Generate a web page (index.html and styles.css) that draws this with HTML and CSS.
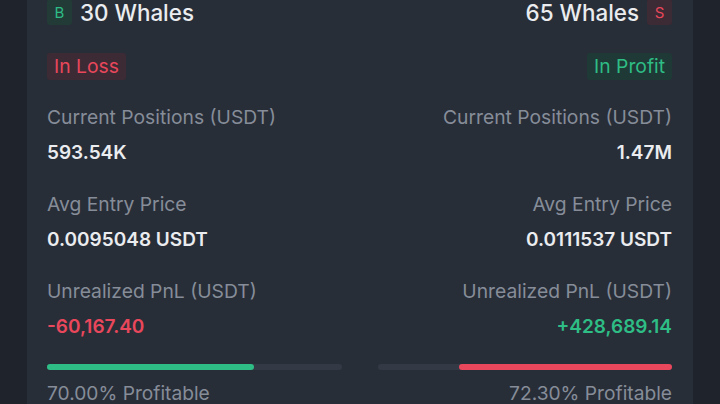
FILE: index.html
```html
<!DOCTYPE html>
<html lang="en">
<head>
<meta charset="utf-8">
<title>Whales Positions</title>
<link rel="stylesheet" href="styles.css">
</head>
<body>
<div class="page">
  <section class="card">
    <div class="col col-long">
      <div class="head">
        <span class="side side-buy">B</span>
        <span class="count">30 Whales</span>
      </div>
      <span class="status status-loss">In Loss</span>
      <div class="stat">
        <div class="label">Current Positions (USDT)</div>
        <div class="value">593.54K</div>
      </div>
      <div class="stat">
        <div class="label">Avg Entry Price</div>
        <div class="value">0.0095048 USDT</div>
      </div>
      <div class="stat">
        <div class="label">Unrealized PnL (USDT)</div>
        <div class="value value-neg">-60,167.40</div>
      </div>
      <div class="bar"><div class="fill fill-green" style="width:70%"></div></div>
      <div class="foot">70.00% Profitable</div>
    </div>
    <div class="col col-short">
      <div class="head">
        <span class="count">65 Whales</span>
        <span class="side side-sell">S</span>
      </div>
      <span class="status status-profit">In Profit</span>
      <div class="stat">
        <div class="label">Current Positions (USDT)</div>
        <div class="value">1.47M</div>
      </div>
      <div class="stat">
        <div class="label">Avg Entry Price</div>
        <div class="value">0.0111537 USDT</div>
      </div>
      <div class="stat">
        <div class="label">Unrealized PnL (USDT)</div>
        <div class="value value-pos">+428,689.14</div>
      </div>
      <div class="bar bar-right"><div class="fill fill-red" style="width:72.3%"></div></div>
      <div class="foot">72.30% Profitable</div>
    </div>
  </section>
</div>
</body>
</html>
```

FILE: styles.css
```css
* { box-sizing: border-box; }
html, body {
  margin: 0;
  padding: 0;
  background: #1f242c;
  font-family: Inter, "Liberation Sans", sans-serif;
  overflow: hidden;
}
.page {
  width: 720px;
  height: 404px;
  padding: 0 27px;
}
.card {
  background: #282e38;
  height: 404px;
  padding: 0 21px 0 20px;
  display: grid;
  grid-template-columns: 295px 294px;
  column-gap: 36px;
  align-content: start;
}
.col {
  display: flex;
  flex-direction: column;
  align-items: flex-start;
  margin-top: -1px;
}
.col-short {
  align-items: flex-end;
  text-align: right;
}
.head {
  display: flex;
  align-items: center;
  gap: 8px;
  height: 26px;
}
.side {
  width: 25px;
  height: 26px;
  border-radius: 3px;
  display: flex;
  align-items: center;
  justify-content: center;
  font-size: 15px;
}
.side-buy { background: #223b37; color: #2ebd85; }
.side-sell { background: #3c2a34; color: #e9475b; }
.count {
  font-size: 22.4px;
  font-weight: 500;
  color: #eaecef;
}
.status {
  margin-top: 28px;
  height: 27px;
  padding: 0 7px;
  border-radius: 3px;
  font-size: 19.3px;
  line-height: 27px;
}
.status-loss { background: #3c2b35; color: #e9475b; }
.status-profit { background: #1f3a36; color: #2ebd85; }
.stat {
  display: flex;
  flex-direction: column;
  gap: 12px;
  margin-top: 25px;
}
.stat + .stat { margin-top: 27px; }
.col-short .stat { align-items: flex-end; }
.label {
  font-size: 19.3px;
  line-height: 24px;
  color: #868d98;
}
.value {
  font-size: 19px;
  line-height: 24px;
  font-weight: 600;
  color: #eaecef;
}
.value-neg { color: #e9475b; }
.value-pos { color: #2ebd85; }
.bar {
  margin-top: 25px;
  width: 100%;
  height: 6px;
  border-radius: 3px;
  background: #343a45;
  display: flex;
}
.bar-right { justify-content: flex-end; }
.fill { height: 100%; border-radius: 3px; }
.fill-green { background: #2ebd85; }
.fill-red { background: #e9475b; }
.foot {
  margin-top: 11px;
  font-size: 19.2px;
  line-height: 24px;
  color: #868d98;
}
```
